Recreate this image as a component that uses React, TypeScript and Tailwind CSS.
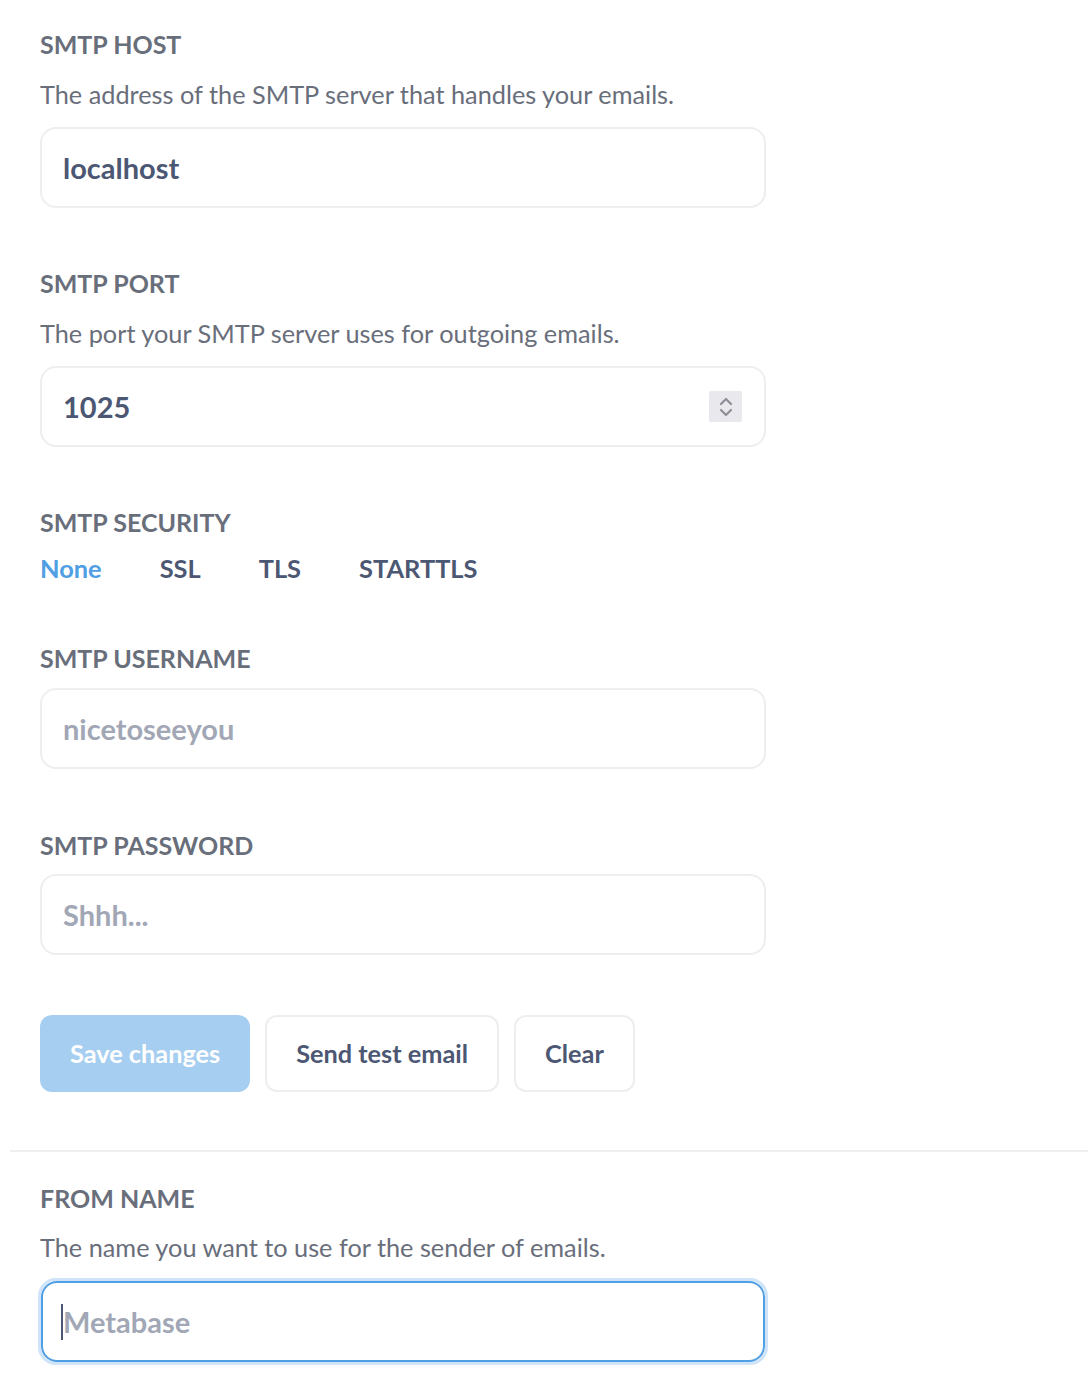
import React from 'react';

const labelCls = 'block text-[25px] leading-[28px] font-bold uppercase text-[#696e7b]';
const descCls = 'text-[25.3px] leading-[28px] text-[#696e7b]';
const fieldCls =
  'flex items-center w-[726px] h-[81px] rounded-[16px] border-2 border-[#efeeee] bg-white px-[21px]';
const inputCls =
  'flex-1 min-w-0 bg-transparent outline-none text-[29px] font-bold text-[#4c5773] placeholder:text-[#a2a7b5]';

function Setting({
  label,
  description,
  children,
  top,
  descTop = 'mt-[22px]',
  fieldTop,
}: {
  label: string;
  description?: string;
  children: React.ReactNode;
  top: string;
  descTop?: string;
  fieldTop?: string;
}) {
  return (
    <div className={top}>
      <span className={labelCls}>{label}</span>
      {description && <p className={`${descTop} ${descCls}`}>{description}</p>}
      <div className={fieldTop ?? (description ? 'mt-[19px]' : 'mt-[16px]')}>{children}</div>
    </div>
  );
}

function Spinner() {
  return (
    <div className="flex flex-col items-center justify-center w-[33px] h-[31px] bg-[#e9e9ed] rounded-[2px] mr-[1px]">
      <svg width="14" height="22" viewBox="0 0 14 22" fill="none" stroke="#8e8e98" strokeWidth="2.2" strokeLinecap="round" strokeLinejoin="round">
        <path d="M2 8 L7 3 L12 8" />
        <path d="M2 14 L7 19 L12 14" />
      </svg>
    </div>
  );
}

export default function App() {
  return (
    <div className="min-h-[1398px] bg-white pl-[40px] pt-[30px] font-['Lato','Noto_Sans',sans-serif] overflow-hidden">
      <Setting top="" label="SMTP Host" description="The address of the SMTP server that handles your emails.">
        <div className={fieldCls}>
          <input className={inputCls} defaultValue="localhost" />
        </div>
      </Setting>

      <Setting top="mt-[61px]" label="SMTP Port" description="The port your SMTP server uses for outgoing emails.">
        <div className={fieldCls}>
          <input className={inputCls} defaultValue="1025" />
          <Spinner />
        </div>
      </Setting>

      {/* Security */}
      <div className="mt-[61px]">
        <span className={labelCls}>SMTP Security</span>
        <div className="mt-[16px] flex gap-[58px] text-[25.4px] leading-[32px] font-bold text-[#4c5773]">
          <span className="text-[#509ee3]">None</span>
          <span>SSL</span>
          <span>TLS</span>
          <span>STARTTLS</span>
        </div>
      </div>

      <Setting top="mt-[60px]" label="SMTP Username">
        <div className={fieldCls}>
          <input className={inputCls} placeholder="nicetoseeyou" />
        </div>
      </Setting>

      <Setting top="mt-[62px]" label="SMTP Password" fieldTop="mt-[15px]">
        <div className={fieldCls}>
          <input className={inputCls} type="password" placeholder="Shhh..." />
        </div>
      </Setting>

      {/* Actions */}
      <div className="mt-[60px] flex gap-[15px] text-[25.3px] font-bold">
        <button className="h-[77px] px-[30px] rounded-[12px] bg-[#509ee3] opacity-50 text-white">
          Save changes
        </button>
        <button className="h-[77px] px-[29px] rounded-[12px] border-2 border-[#efeeee] bg-white text-[#4c5773]">
          Send test email
        </button>
        <button className="h-[77px] px-[29px] rounded-[12px] border-2 border-[#efeeee] bg-white text-[#4c5773]">
          Clear
        </button>
      </div>

      <div className="mt-[58px] -ml-[30px] h-[2px] bg-[#eeeeee]" />

      <Setting
        top="mt-[32px]"
        label="From Name"
        description="The name you want to use for the sender of emails."
        descTop="mt-[21px]"
      >
        <div className="w-[730px] -ml-[2px] -mt-[2px] rounded-[18px] border-[3px] border-[#cfe4f8]">
          <div className="flex items-center h-[81px] rounded-[16px] border-2 border-[#509ee3] bg-white pl-[18px] pr-[21px]">
            <span className="w-[2px] h-[36px] bg-[#4c5773]" />
            <input className={inputCls} placeholder="Metabase" />
          </div>
        </div>
      </Setting>
    </div>
  );
}
